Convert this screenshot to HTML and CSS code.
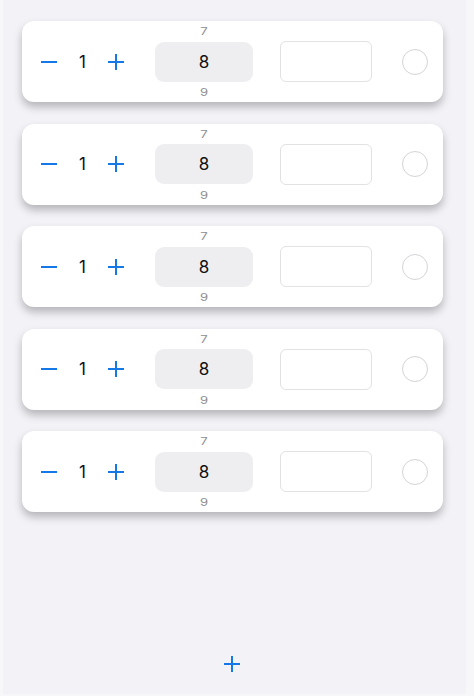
FILE: index.html
```html
<!DOCTYPE html>
<html>
<head>
<meta charset="utf-8">
<link rel="stylesheet" href="styles.css">
</head>
<body>
<main class="screen">
  <div class="list">
    <div class="card">
      <div class="stepper">
        <svg class="icon" viewBox="0 0 18 18"><path d="M1 9h16" /></svg>
        <span class="count">1</span>
        <svg class="icon" viewBox="0 0 18 18"><path d="M1 9h16M9 1v16" /></svg>
      </div>
      <div class="picker">
        <span class="wheel">7</span>
        <span class="selected">8</span>
        <span class="wheel">9</span>
      </div>
      <div class="field"></div>
      <div class="radio"></div>
    </div>
    <div class="card">
      <div class="stepper">
        <svg class="icon" viewBox="0 0 18 18"><path d="M1 9h16" /></svg>
        <span class="count">1</span>
        <svg class="icon" viewBox="0 0 18 18"><path d="M1 9h16M9 1v16" /></svg>
      </div>
      <div class="picker">
        <span class="wheel">7</span>
        <span class="selected">8</span>
        <span class="wheel">9</span>
      </div>
      <div class="field"></div>
      <div class="radio"></div>
    </div>
    <div class="card">
      <div class="stepper">
        <svg class="icon" viewBox="0 0 18 18"><path d="M1 9h16" /></svg>
        <span class="count">1</span>
        <svg class="icon" viewBox="0 0 18 18"><path d="M1 9h16M9 1v16" /></svg>
      </div>
      <div class="picker">
        <span class="wheel">7</span>
        <span class="selected">8</span>
        <span class="wheel">9</span>
      </div>
      <div class="field"></div>
      <div class="radio"></div>
    </div>
    <div class="card">
      <div class="stepper">
        <svg class="icon" viewBox="0 0 18 18"><path d="M1 9h16" /></svg>
        <span class="count">1</span>
        <svg class="icon" viewBox="0 0 18 18"><path d="M1 9h16M9 1v16" /></svg>
      </div>
      <div class="picker">
        <span class="wheel">7</span>
        <span class="selected">8</span>
        <span class="wheel">9</span>
      </div>
      <div class="field"></div>
      <div class="radio"></div>
    </div>
    <div class="card">
      <div class="stepper">
        <svg class="icon" viewBox="0 0 18 18"><path d="M1 9h16" /></svg>
        <span class="count">1</span>
        <svg class="icon" viewBox="0 0 18 18"><path d="M1 9h16M9 1v16" /></svg>
      </div>
      <div class="picker">
        <span class="wheel">7</span>
        <span class="selected">8</span>
        <span class="wheel">9</span>
      </div>
      <div class="field"></div>
      <div class="radio"></div>
    </div>
  </div>
  <div class="footer">
    <svg class="add" viewBox="0 0 16 16"><path d="M0 8h16M8 0v16" /></svg>
  </div>
</main>
</body>
</html>
```
FILE: styles.css
```css
html, body {
  margin: 0;
  padding: 0;
  height: 100%;
}
body {
  background: #f7f7fa;
  font-family: Inter, "Liberation Sans", sans-serif;
}
.screen {
  margin: 0 8px 2px 3px;
  height: 694px;
  background: #f2f2f7;
  display: flex;
  flex-direction: column;
  box-sizing: border-box;
  padding: 21px 0 0 19px;
}
.list {
  display: flex;
  flex-direction: column;
  gap: 21.5px;
}
.card {
  width: 421px;
  height: 81px;
  background: #ffffff;
  border-radius: 12px;
  box-shadow: 0 5px 9px rgba(0, 0, 0, 0.25);
  display: flex;
  align-items: center;
  box-sizing: border-box;
  padding-left: 18px;
}
.stepper {
  display: flex;
  align-items: center;
  width: 115px;
}
.icon {
  width: 18px;
  height: 18px;
  stroke: #1479e6;
  stroke-width: 2;
  fill: none;
}
.count {
  font-size: 17px;
  color: #111;
  width: 49px;
  text-align: center;
}
.picker {
  width: 98px;
  height: 81px;
  display: flex;
  flex-direction: column;
  align-items: center;
  justify-content: space-between;
}
.wheel {
  font-size: 13px;
  line-height: 20px;
  color: #8e8e91;
  transform: scaleY(0.8);
}
.selected {
  width: 98px;
  height: 40px;
  background: #eeeef0;
  border-radius: 9px;
  display: flex;
  align-items: center;
  justify-content: center;
  font-size: 17px;
  color: #111;
}
.field {
  margin-left: 27px;
  width: 92px;
  height: 41px;
  box-sizing: border-box;
  border: 1px solid #e2e2e4;
  border-radius: 6px;
}
.radio {
  margin-left: 30px;
  width: 26px;
  height: 26px;
  box-sizing: border-box;
  border: 1.5px solid #d4d4d8;
  border-radius: 50%;
}
.footer {
  margin-top: auto;
  display: flex;
  justify-content: center;
  padding: 0 5px 22px 0;
  margin-left: -19px;
}
.add {
  width: 16px;
  height: 16px;
  stroke: #1479e6;
  stroke-width: 2;
  fill: none;
}
```
